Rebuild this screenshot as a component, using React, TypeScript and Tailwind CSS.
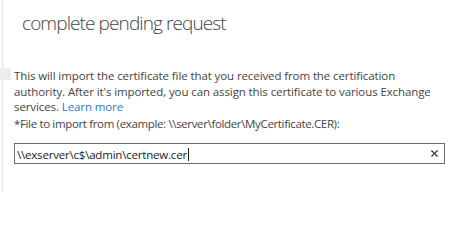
import { X } from 'lucide-react';

export default function App() {
  return (
    <div className="relative h-[200px] w-[474px] overflow-hidden bg-white font-['Open_Sans','Liberation_Sans',sans-serif] text-[#444]">
      <div className="absolute left-0 top-[68px] h-[12px] w-[11px] bg-[#ececec]" />
      <div className="ml-[2px] h-[190px] border-l border-[#e4e4e4] pl-[11px]">
        <h1 className="pl-[8px] pt-[10px] text-[19px] font-light leading-[26px] tracking-[-0.9px] text-[#444]">
          complete pending request
        </h1>

        <p className="mt-[32px] w-[440px] text-[11.5px] leading-[15.5px] tracking-[-0.1px]">
          This will import the certificate file that you received from the certification
          <br />
          authority. After it's imported, you can assign this certificate to various Exchange
          <br />
          services.{' '}
          <a className="text-[#1f7bc6]" href="#">
            Learn more
          </a>
        </p>

        <label className="mt-[1px] block text-[11.5px] leading-[15.5px] tracking-[-0.35px]">
          *File to import from (example: \\server\folder\MyCertificate.CER):
        </label>

        <div className="mt-[12px] flex h-[21px] w-[431px] items-center border border-[#6b6b6b] pl-[2px] pr-[4px]">
          <span className="flex-1 text-[11.5px] leading-[15px] tracking-[-0.2px] text-[#222]">
            \\exserver\c$\admin\certnew.cer
            <span className="ml-[1px] inline-block h-[13px] w-px translate-y-[2px] bg-[#222]" />
          </span>
          <X className="h-[11px] w-[11px] text-[#333]" strokeWidth={2.5} />
        </div>
      </div>
    </div>
  );
}
